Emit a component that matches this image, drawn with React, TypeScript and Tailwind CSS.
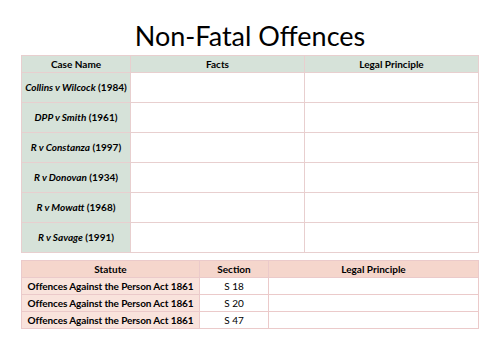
import React from "react";

const cases: [string, string][] = [
  ["Collins v Wilcock", "(1984)"],
  ["DPP v Smith", "(1961)"],
  ["R v Constanza", "(1997)"],
  ["R v Donovan", "(1934)"],
  ["R v Mowatt", "(1968)"],
  ["R v Savage", "(1991)"],
];

const statutes = ["S 18", "S 20", "S 47"];

export default function App() {
  return (
    <div
      className="w-[500px] h-[353px] bg-white text-black overflow-hidden"
      style={{ fontFamily: "Lato, 'Open Sans', sans-serif" }}
    >
      <h1 className="text-center text-[27px] font-normal leading-none pt-[22px] h-[55px]">
        Non-Fatal Offences
      </h1>
      <table className="ml-[21px] w-[457px] border-collapse table-fixed text-[10px] font-bold">
        <colgroup>
          <col className="w-[109px]" />
          <col className="w-[174px]" />
          <col className="w-[174px]" />
        </colgroup>
        <thead>
          <tr className="h-[17px] bg-[#d6e2d9]">
            <th className="border border-[#e8cfcf] text-center">Case Name</th>
            <th className="border border-[#e8cfcf] text-center">Facts</th>
            <th className="border border-[#e8cfcf] text-center">Legal Principle</th>
          </tr>
        </thead>
        <tbody>
          {cases.map(([n, y]) => (
            <tr key={n} className="h-[30px]">
              <td className="border border-[#e8cfcf] bg-[#d6e2d9] text-center whitespace-nowrap">
                <i>{n}</i> {y}
              </td>
              <td className="border border-[#e8cfcf]"></td>
              <td className="border border-[#e8cfcf]"></td>
            </tr>
          ))}
        </tbody>
      </table>
      <table className="ml-[21px] mt-[7px] w-[457px] border-collapse table-fixed text-[10px]">
        <colgroup>
          <col className="w-[178px]" />
          <col className="w-[69px]" />
          <col className="w-[210px]" />
        </colgroup>
        <thead>
          <tr className="h-[17px] bg-[#f5d6cc] font-bold">
            <th className="border border-[#ebcaca] text-center">Statute</th>
            <th className="border border-[#ebcaca] text-center">Section</th>
            <th className="border border-[#ebcaca] text-center">Legal Principle</th>
          </tr>
        </thead>
        <tbody>
          {statutes.map((s) => (
            <tr key={s} className="h-[17px]">
              <td className="border border-[#ebcaca] bg-[#f9e3dc] font-bold text-center whitespace-nowrap tracking-[-0.1px]">
                Offences Against the Person Act 1861
              </td>
              <td className="border border-[#ebcaca] text-center">{s}</td>
              <td className="border border-[#ebcaca]"></td>
            </tr>
          ))}
        </tbody>
      </table>
    </div>
  );
}
